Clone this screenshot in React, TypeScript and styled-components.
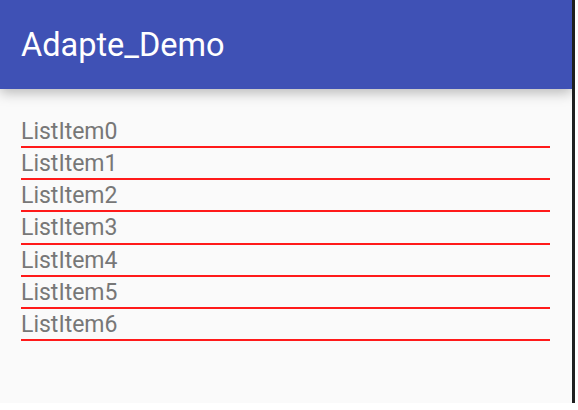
import React from "react";
import styled, { createGlobalStyle } from "styled-components";

const Global = createGlobalStyle`
  html, body { margin: 0; padding: 0; background: #ffffff; }
  body { font-family: Roboto, "Noto Sans", sans-serif; }
`;

const Screen = styled.div`
  width: 572px;
  height: 403px;
  background: #fafafa;
  border-right: 3px solid #1f1f1f;
  display: flex;
  flex-direction: column;
  overflow: hidden;
`;

const AppBar = styled.header`
  height: 89px;
  flex: none;
  background: #3f51b5;
  display: flex;
  align-items: center;
  padding-left: 21px;
  box-shadow: 0 4px 12px rgba(0, 0, 0, 0.26);
  position: relative;
  z-index: 1;
`;

const Title = styled.h1`
  margin: 0;
  font-family: Roboto, sans-serif;
  font-weight: 400;
  font-size: 32.5px;
  color: #ffffff;
  letter-spacing: 0;
`;

const List = styled.ul`
  list-style: none;
  margin: 0;
  padding: 27px 22px 0 21px;
`;

const Item = styled.li`
  height: 30.17px;
  border-bottom: 2px solid #ff1a1a;
  font-family: Roboto, sans-serif;
  font-size: 23px;
  line-height: 32px;
  color: #777777;
  overflow: hidden;
`;

const items = Array.from({ length: 7 }, (_, i) => `ListItem${i}`);

export default function App() {
  return (
    <>
      <Global />
      <Screen>
        <AppBar>
          <Title>Adapte_Demo</Title>
        </AppBar>
        <List>
          {items.map((t) => (
            <Item key={t}>{t}</Item>
          ))}
        </List>
      </Screen>
    </>
  );
}
